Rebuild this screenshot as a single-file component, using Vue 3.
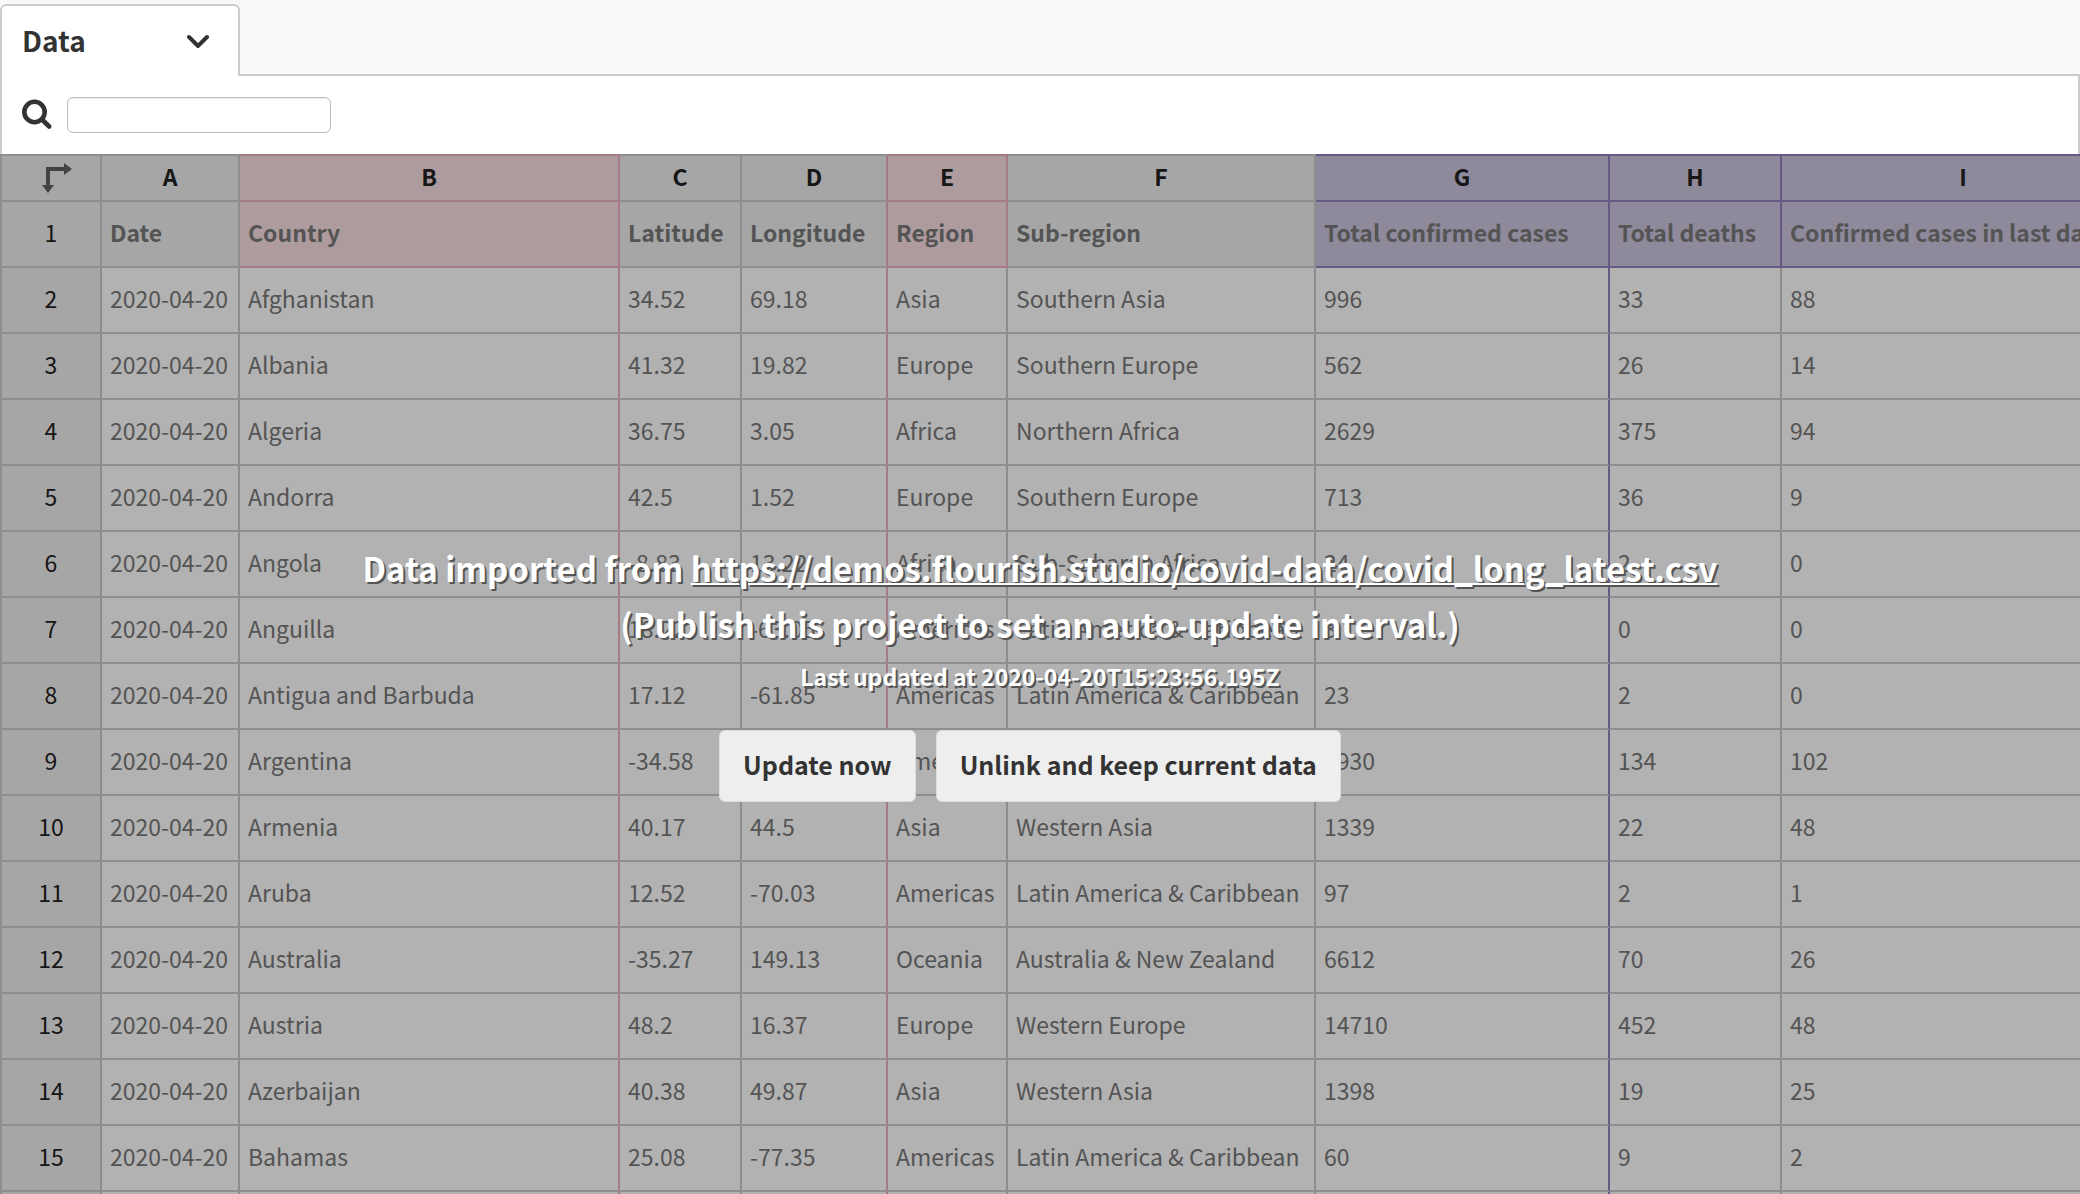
<script setup>
const columns = [
  { letter: 'A', title: 'Date', width: 138 },
  { letter: 'B', title: 'Country', width: 380, tone: 'pink', edge: 'pink' },
  { letter: 'C', title: 'Latitude', width: 122 },
  { letter: 'D', title: 'Longitude', width: 146, edge: 'pink', headEdge: 'pink' },
  { letter: 'E', title: 'Region', width: 120, tone: 'pink' },
  { letter: 'F', title: 'Sub-region', width: 308 },
  { letter: 'G', title: 'Total confirmed cases', width: 294, tone: 'purple', edge: 'purple' },
  { letter: 'H', title: 'Total deaths', width: 172, tone: 'purple' },
  { letter: 'I', title: 'Confirmed cases in last day', width: 364, tone: 'purple' },
]

const day = '2020-04-20'
const caribbean = 'Latin America & Caribbean'
const rows = [
  [day, 'Afghanistan', '34.52', '69.18', 'Asia', 'Southern Asia', '996', '33', '88'],
  [day, 'Albania', '41.32', '19.82', 'Europe', 'Southern Europe', '562', '26', '14'],
  [day, 'Algeria', '36.75', '3.05', 'Africa', 'Northern Africa', '2629', '375', '94'],
  [day, 'Andorra', '42.5', '1.52', 'Europe', 'Southern Europe', '713', '36', '9'],
  [day, 'Angola', '-8.83', '13.22', 'Africa', 'Sub-Saharan Africa', '24', '2', '0'],
  [day, 'Anguilla', '18.22', '-63.05', 'Americas', caribbean, '3', '0', '0'],
  [day, 'Antigua and Barbuda', '17.12', '-61.85', 'Americas', caribbean, '23', '2', '0'],
  [day, 'Argentina', '-34.58', '-58.67', 'Americas', caribbean, '2930', '134', '102'],
  [day, 'Armenia', '40.17', '44.5', 'Asia', 'Western Asia', '1339', '22', '48'],
  [day, 'Aruba', '12.52', '-70.03', 'Americas', caribbean, '97', '2', '1'],
  [day, 'Australia', '-35.27', '149.13', 'Oceania', 'Australia & New Zealand', '6612', '70', '26'],
  [day, 'Austria', '48.2', '16.37', 'Europe', 'Western Europe', '14710', '452', '48'],
  [day, 'Azerbaijan', '40.38', '49.87', 'Asia', 'Western Asia', '1398', '19', '25'],
  [day, 'Bahamas', '25.08', '-77.35', 'Americas', caribbean, '60', '9', '2'],
  ['', '', '', '', '', '', '', '', ''],
]

const headClass = (c) => [c.tone, c.headEdge && `edge-${c.headEdge}`]
const cellClass = (i) => columns[i].edge && `edge-${columns[i].edge}`
</script>

<template>
  <div class="editor">
    <header class="tabs">
      <button class="tab" type="button">
        <span>Data</span>
        <svg width="24" height="16" viewBox="0 0 24 16" aria-hidden="true">
          <path d="M3 5 12 14 21 5" fill="none" stroke="#333" stroke-width="4" stroke-linecap="round" />
        </svg>
      </button>
    </header>

    <form class="search" @submit.prevent>
      <label for="search" aria-label="Search">
        <svg width="32" height="32" viewBox="0 0 32 32" aria-hidden="true">
          <circle cx="13.5" cy="13" r="10.2" fill="none" stroke="#333" stroke-width="4.6" />
          <path d="M21 20.5 28.2 27.5" stroke="#333" stroke-width="4.6" stroke-linecap="round" />
        </svg>
      </label>
      <input id="search" type="text" />
    </form>

    <main class="sheet">
      <table>
        <colgroup>
          <col class="num-col" />
          <col v-for="c in columns" :key="c.letter" :style="{ width: c.width + 'px' }" />
        </colgroup>
        <thead>
          <tr class="letters">
            <th class="corner">
              <svg width="32" height="32" viewBox="0 0 32 32" aria-hidden="true">
                <path d="M5 5H23V1L31 7 23 13V9H9V23H13L7 31 1 23H5Z" fill="#606060" />
              </svg>
            </th>
            <th v-for="c in columns" :key="c.letter" scope="col" :class="headClass(c)">{{ c.letter }}</th>
          </tr>
          <tr class="titles">
            <th scope="row" class="num">1</th>
            <th v-for="c in columns" :key="c.letter" scope="col" :class="headClass(c)">{{ c.title }}</th>
          </tr>
        </thead>
        <tbody>
          <tr v-for="(row, r) in rows" :key="r">
            <th scope="row" class="num">{{ row[0] ? r + 2 : '' }}</th>
            <td v-for="(cell, i) in row" :key="i" :class="cellClass(i)">{{ cell }}</td>
          </tr>
        </tbody>
      </table>

      <section class="overlay">
        <p class="message">
          Data imported from
          <a href="https://demos.flourish.studio/covid-data/covid_long_latest.csv">https://demos.flourish.studio/covid-data/covid_long_latest.csv</a>
        </p>
        <p class="message">(Publish this project to set an auto-update interval.)</p>
        <p class="updated">Last updated at 2020-04-20T15:23:56.195Z</p>
        <div class="actions">
          <button type="button">Update now</button>
          <button type="button">Unlink and keep current data</button>
        </div>
      </section>
    </main>
  </div>
</template>

<style>
body {
  margin: 0;
}
</style>

<style scoped>
.editor,
.editor button {
  font-family: 'Noto Sans CJK SC', 'Open Sans', sans-serif;
}

.editor {
  display: flex;
  flex-direction: column;
  height: 100vh;
  overflow: hidden;
  background: #fff;
}

.tabs {
  display: flex;
  flex: none;
  padding-top: 4px;
  background: #f9f9f9;
  box-shadow: inset 0 -2px #ccc;
}

.tab {
  box-sizing: border-box;
  display: flex;
  align-items: center;
  justify-content: space-between;
  width: 240px;
  height: 72px;
  padding: 0 28px 2px 20px;
  border: 2px solid #ccc;
  border-bottom: 0;
  border-radius: 6px 6px 0 0;
  background: #fff;
  color: #333;
  font-size: 28px;
  font-weight: 700;
  line-height: 40px;
}

.search {
  display: flex;
  flex: none;
  align-items: center;
  height: 78px;
  padding-left: 19px;
  border: 2px solid #ccc;
  border-width: 0 2px;
}

.search label {
  display: flex;
  margin-right: 14px;
}

.search input {
  box-sizing: border-box;
  width: 264px;
  height: 36px;
  padding: 0 8px;
  border: 1px solid #bbb;
  border-radius: 6px;
  background: #fff;
  box-shadow: inset 0 1px #eee;
  font-size: 23px;
}

.sheet {
  position: relative;
  flex: 1;
  min-height: 0;
  overflow: hidden;
}

table {
  width: 2146px;
  table-layout: fixed;
  border-collapse: separate;
  border-spacing: 0;
  font-size: 23px;
  line-height: 32px;
}

.num-col {
  width: 102px;
}

th,
td {
  box-sizing: border-box;
  height: 66px;
  padding: 0 8px 4px;
  border: 0 solid #ccc;
  border-width: 0 2px 2px 0;
  color: #797979;
  font-weight: 400;
  text-align: left;
  white-space: nowrap;
}

th {
  background: #eee;
}

.letters th {
  height: 48px;
  border-top-width: 2px;
  color: #222;
  font-weight: 600;
  text-align: center;
}

.titles th {
  font-weight: 600;
}

th.corner,
th.num {
  border-left-width: 2px;
}

th.corner {
  padding: 0 0 0 12px;
}

th.corner svg {
  display: block;
  margin: 0 auto;
}

th.num {
  color: #222;
  font-weight: 400;
  text-align: center;
}

th.pink {
  border-color: #ecb1c2;
  background: #f9dfe3;
}

th.purple {
  border-color: #9282be;
  background: #ccc4df;
}

.edge-pink {
  border-right-color: #ecb1c2;
}

.edge-purple {
  border-right-color: #9282be;
}

.overlay {
  position: absolute;
  inset: 0;
  display: flex;
  flex-direction: column;
  align-items: center;
  justify-content: center;
  padding-bottom: 6px;
  background: rgba(0, 0, 0, 0.3);
  color: #fff;
  font-weight: 700;
  text-align: center;
  text-shadow: 2px 2px #555;
}

.overlay p {
  margin: 0;
}

.message {
  font-size: 33px;
  line-height: 56px;
}

.message a {
  color: inherit;
  text-decoration-thickness: 2px;
}

.updated {
  font-size: 23px;
  line-height: 48px;
}

.actions {
  display: flex;
  margin-top: 30px;
}

.actions button {
  height: 72px;
  margin-right: 20px;
  padding: 0 23px 4px;
  border: 1px solid #ddd;
  border-radius: 6px;
  background: #eee;
  color: #333;
  font-size: 25px;
  font-weight: 700;
}
</style>
